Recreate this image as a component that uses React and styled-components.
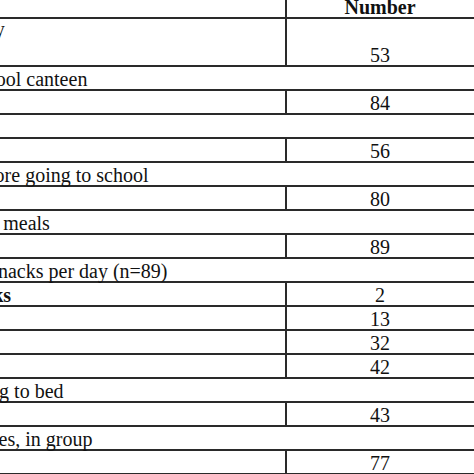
import React from "react";
import styled, { createGlobalStyle } from "styled-components";

const GlobalStyle = createGlobalStyle`
  html, body {
    margin: 0;
    padding: 0;
    background: #ffffff;
  }
`;

// the page only shows a cut of the table, so the frame clips it
const Frame = styled.div`
  width: 474px;
  height: 474px;
  overflow: hidden;
  background: #ffffff;
  font-family: "Liberation Serif", "Times New Roman", serif;
  font-size: 20px;
  line-height: 20px;
  color: #111111;
`;

const Table = styled.div`
  width: 581px;
  margin-left: -106px;
  margin-top: -5px;
  display: flex;
  flex-direction: column;
`;

const Row = styled.div`
  display: flex;
  box-sizing: border-box;
  height: ${(p) => (p.$tall ? 48 : 24)}px;
  border-bottom: 2px solid #2a2a2a;
`;

const Label = styled.div`
  flex: 0 0 ${(p) => (p.$full ? 581 : 391)}px;
  box-sizing: border-box;
  padding: ${(p) => (p.$tall ? 0 : 2)}px 0 0 ${(p) => 4 + (p.$indent ? 27 : 0)}px;
  font-weight: ${(p) => (p.$bold ? 700 : 400)};
  white-space: nowrap;
`;

const Value = styled.div`
  flex: 0 0 190px;
  box-sizing: border-box;
  border-left: 2px solid #2a2a2a;
  display: flex;
  flex-direction: column;
  justify-content: ${(p) => (p.$tall ? "flex-end" : "flex-start")};
  align-items: center;
  padding-top: 2px;
  padding-right: 2px;
  font-weight: ${(p) => (p.$bold ? 700 : 400)};
`;

const rows = [
  { kind: "section", label: "Dines at school canteen" },
  { label: "Yes", value: "84" },
  { kind: "section", label: "Fast food" },
  { label: "Yes", value: "56" },
  { kind: "section", label: "Eat fruit before going to school" },
  { label: "Yes", value: "80" },
  { kind: "section", label: "Taking main meals" },
  { label: "Yes", value: "89" },
  { kind: "section", label: "Number of snacks per day (n=89)" },
  { label: "No snacks", value: "2", bold: true },
  { label: "1 snack", value: "13" },
  { label: "2 snacks", value: "32" },
  { label: "3 snacks", value: "42" },
  { kind: "section", label: "Eat late going to bed" },
  { label: "Yes", value: "43" },
  { kind: "section", label: "Playing games, in group" },
  { label: "Yes", value: "77" },
];

const App = () => {
  return (
    <>
      <GlobalStyle />
      <Frame>
        <Table>
          <Row>
            <Label />
            <Value $bold>Number</Value>
          </Row>

          <Row $tall>
            <Label $tall>
              Eat fish daily
              <br />
              &nbsp;&nbsp;&nbsp;&nbsp;Yes
            </Label>
            <Value $tall>53</Value>
          </Row>

          {rows.map((row, index) =>
            row.kind === "section" ? (
              <Row key={index}>
                <Label $full>{row.label}</Label>
              </Row>
            ) : (
              <Row key={index}>
                <Label $indent $bold={row.bold}>
                  {row.label}
                </Label>
                <Value>{row.value}</Value>
              </Row>
            )
          )}
        </Table>
      </Frame>
    </>
  );
};

export default App;
